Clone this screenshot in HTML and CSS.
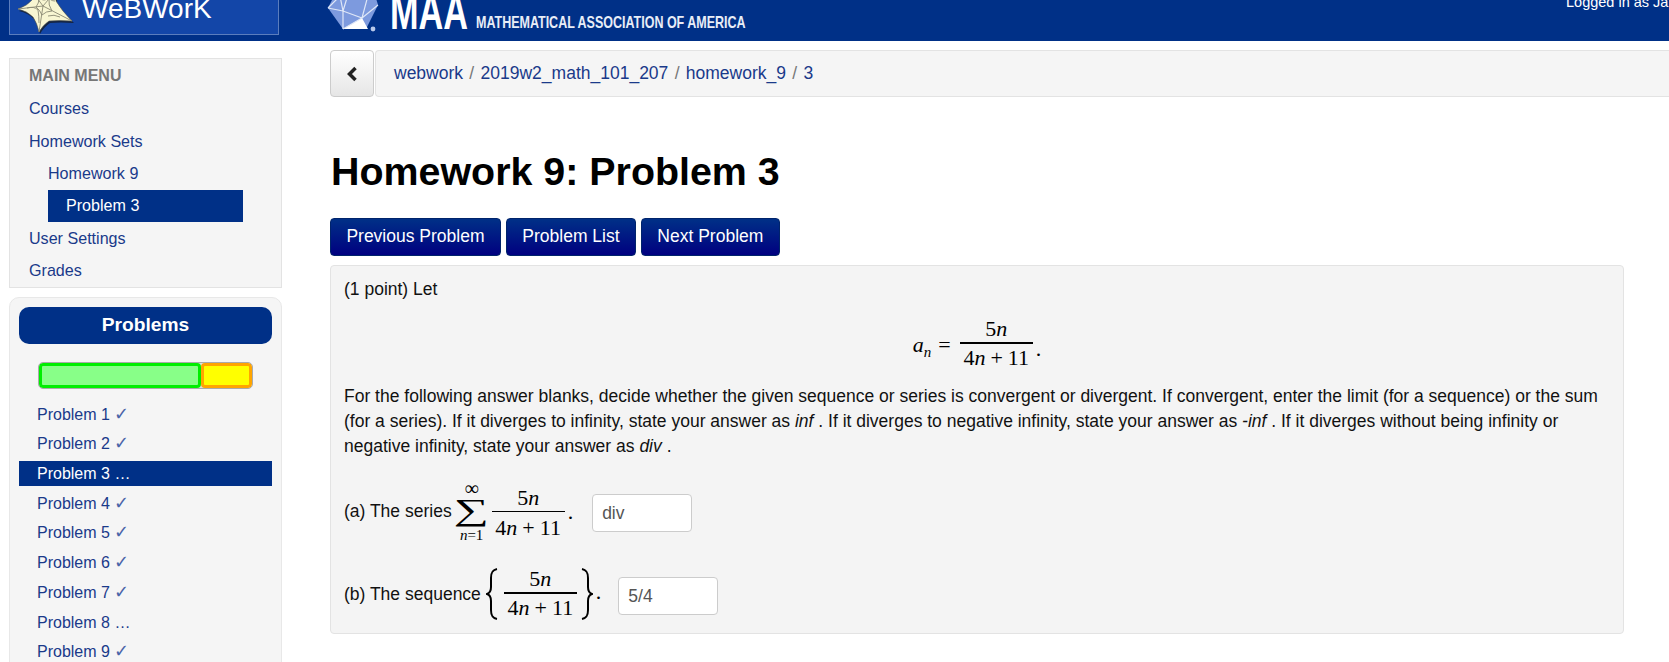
FILE: index.html
```html
<!DOCTYPE html>
<html lang="en">
<head>
<meta charset="utf-8">
<title>Homework 9: Problem 3</title>
<link rel="stylesheet" href="styles.css">
</head>
<body>
<header class="topbar">
  <a class="brand">
    <svg class="star" viewBox="0 0 70 50" width="70" height="50" aria-hidden="true">
      <path class="star-shadow" d="M9 25 Q18 22 24 15 Q22 8 19 2 Q27 6 34 9 Q42 6 51 2 Q47 10 47 17 Q53 27 64 37 Q50 36 40 37 Q34 41 30 48 Q28 39 24 33 Q18 27 9 25 Z"/>
      <path class="star-fill" d="M8 23 Q17 20 23 13 Q21 6 18 0 Q26 4 33 7 Q41 4 50 0 Q46 8 46 15 Q52 25 62 35 Q49 34 39 35 Q33 39 29 46 Q27 37 23 31 Q17 25 8 23 Z"/>
      <path class="star-web" d="M33 20 L18 0 M33 20 L50 0 M33 20 L62 35 M33 20 L29 46 M33 20 L8 23 M26 21 Q29 17 29 13 Q34 15 39 13 Q38 19 42 25 Q36 25 32 29 Q30 24 26 21 Z M17 22 Q24 20 28 24 Q29 30 29 37 M38 30 Q44 28 50 31 M45 15 Q40 15 38 10"/>
    </svg>
    <span class="brand-name">WeBWorK</span>
  </a>
  <div class="maa">
    <svg class="maa-gem" viewBox="0 0 56 46" width="56" height="46" aria-hidden="true">
      <path class="gem-body" d="M12 0 L47 0 L52 17 L40 41 L17 41 L2 20 Z"/>
      <path class="gem-white" d="M17 41 L36 30 L42 41 Z"/>
      <path class="gem-lines" d="M2 20 L17 23 L36 30 L44 0 M17 23 L17 41 M17 23 L24 0 M36 30 L52 17 M36 30 L17 41 M2 20 L14 8 L24 0 M14 8 L17 23"/>
      <circle class="gem-dot" cx="47" cy="41" r="2.4"/>
    </svg>
    <span class="maa-mark">MAA</span>
    <span class="maa-name">MATHEMATICAL ASSOCIATION OF AMERICA</span>
  </div>
  <div class="login">Logged in as Ja</div>
</header>

<div class="page">
  <aside class="sidebar">
    <nav class="menu">
      <div class="menu-title">MAIN MENU</div>
      <a class="menu-item">Courses</a>
      <a class="menu-item">Homework Sets</a>
      <a class="menu-item sub">Homework 9</a>
      <a class="menu-item sub active"><span>Problem 3</span></a>
      <a class="menu-item">User Settings</a>
      <a class="menu-item">Grades</a>
    </nav>
    <section class="problems">
      <h2 class="problems-title">Problems</h2>
      <div class="progress">
        <div class="seg seg-done"></div>
        <div class="seg seg-part"></div>
      </div>
      <ul class="plist">
        <li class="pitem">Problem 1 <span class="mark">✓</span></li>
        <li class="pitem">Problem 2 <span class="mark">✓</span></li>
        <li class="pitem current">Problem 3 <span>…</span></li>
        <li class="pitem">Problem 4 <span class="mark">✓</span></li>
        <li class="pitem">Problem 5 <span class="mark">✓</span></li>
        <li class="pitem">Problem 6 <span class="mark">✓</span></li>
        <li class="pitem">Problem 7 <span class="mark">✓</span></li>
        <li class="pitem">Problem 8 <span>…</span></li>
        <li class="pitem">Problem 9 <span class="mark">✓</span></li>
      </ul>
    </section>
  </aside>

  <main class="content">
    <div class="crumbs">
      <button class="back" aria-label="Back">
        <svg viewBox="0 0 12 16" width="12" height="16" aria-hidden="true"><path d="M9.5 2 L3.5 8 L9.5 14" /></svg>
      </button>
      <div class="crumb-trail">
        <a>webwork</a><span class="sep">/</span><a>2019w2_math_101_207</a><span class="sep">/</span><a>homework_9</a><span class="sep">/</span><a>3</a>
      </div>
    </div>

    <h1 class="title">Homework 9: Problem 3</h1>

    <div class="actions">
      <button class="btn">Previous Problem</button>
      <button class="btn">Problem List</button>
      <button class="btn">Next Problem</button>
    </div>

    <article class="problem">
      <p class="line">(1 point) Let</p>
      <div class="display">
        <span class="math var">a<sub>n</sub></span>
        <span class="math eq">=</span>
        <span class="frac"><span class="num math">5<i>n</i></span><span class="den math">4<i>n</i><span class="plus">+</span>11</span></span>
        <span class="math dot">.</span>
      </div>
      <p class="para">For the following answer blanks, decide whether the given sequence or series is convergent or divergent. If convergent, enter the limit (for a sequence) or the sum (for a series). If it diverges to infinity, state your answer as <i>inf</i> . If it diverges to negative infinity, state your answer as <i>-inf</i> . If it diverges without being infinity or negative infinity, state your answer as <i>div</i> .</p>

      <div class="answer answer-a">
        <span>(a) The series</span>
        <span class="sum math"><span class="sum-top">∞</span><span class="sum-sign">∑</span><span class="sum-bot"><i>n</i>=1</span></span>
        <span class="frac"><span class="num math">5<i>n</i></span><span class="den math">4<i>n</i><span class="plus">+</span>11</span></span>
        <span class="math dot-low">.</span>
        <input class="field field-a" value="div" aria-label="answer a">
      </div>

      <div class="answer answer-b">
        <span>(b) The sequence</span>
        <svg class="brace brace-l" viewBox="0 0 12 52" width="12" height="52" aria-hidden="true"><path d="M11 1 C6 2 5 5 5 10 L5 19 C5 23 4 25 1 26 C4 27 5 29 5 33 L5 42 C5 47 6 50 11 51"/></svg>
        <span class="frac"><span class="num math">5<i>n</i></span><span class="den math">4<i>n</i><span class="plus">+</span>11</span></span>
        <svg class="brace brace-r" viewBox="0 0 12 52" width="12" height="52" aria-hidden="true"><path d="M1 1 C6 2 7 5 7 10 L7 19 C7 23 8 25 11 26 C8 27 7 29 7 33 L7 42 C7 47 6 50 1 51"/></svg>
        <span class="math dot-low">.</span>
        <input class="field field-b" value="5/4" aria-label="answer b">
      </div>
    </article>
  </main>
</div>
</body>
</html>
```

FILE: styles.css
```css
* { box-sizing: border-box; }
html, body { margin: 0; padding: 0; height: 662px; overflow: hidden; background: #fff; }
body { font-family: "Liberation Sans", Arial, sans-serif; font-size: 16px; color: #111; }
a { color: #1a3a8a; text-decoration: none; }

/* top bar */
.topbar { height: 41px; background: #003087; display: flex; overflow: hidden; color: #fff; }
.brand { width: 270px; height: 35px; margin-left: 9px; background: #1346a8; border: 1px solid #5b7dbd; border-top: 0; display: flex; overflow: hidden; flex: none; }
.star { flex: none; margin: -14px 0 0 0; }
.star-shadow { fill: #141c2b; opacity: .8; }
.star-fill { fill: #f8f6d2; stroke: #55564c; stroke-width: .6; }
.star-web { fill: none; stroke: #8a8974; stroke-width: .9; }
.brand-name { font-size: 28px; line-height: 32px; color: #fff; margin: -7px 0 0 2px; }
.maa { display: flex; margin-left: 47px; flex: none; height: 41px; }
.maa-gem { flex: none; margin-top: -12px; }
.gem-body { fill: #7d9ade; }
.gem-white { fill: #fff; }
.gem-lines { fill: none; stroke: #dfe7f7; stroke-width: 1.2; }
.gem-dot { fill: #b9c9ea; }
.maa-mark { display: block; font-size: 50px; line-height: 50px; font-weight: bold; color: #fff; margin: -13px 0 0 8px; width: 78px; flex: none; transform: scaleX(.685); transform-origin: left top; }
.maa-name { display: block; flex: none; width: 366px; margin: 14px 0 0 8px; font-size: 17px; line-height: 17px; font-weight: bold; white-space: nowrap; color: #e8edf7; transform: scaleX(.735); transform-origin: left top; }
.login { margin-left: auto; width: 103px; flex: none; overflow: hidden; white-space: nowrap; font-size: 14.5px; line-height: 16px; margin-top: -6px; height: 22px; }

/* page */
.page { display: flex; align-items: flex-start; }
.sidebar { width: 273px; margin-left: 9px; flex: none; padding-top: 17px; }
.menu { height: 230px; background: #f5f5f5; border: 1px solid #e3e3e3; padding: 0 19px; }
.menu-title { font-weight: bold; color: #777; line-height: 34px; height: 33.4px; }
.menu-item { display: block; height: 32.4px; line-height: 32.4px; font-size: 16.1px; }
.menu-item.sub { margin-left: 19px; margin-right: 19px; }
.menu-item.active { background: #003087; color: #fff; padding-left: 18px; height: 32px; line-height: 31px; }

.problems { margin-top: 9px; background: #f5f5f5; border: 1px solid #e8e8e8; border-radius: 10px 10px 0 0; padding: 9px 9px 0; height: 420px; }
.problems-title { margin: 0; height: 37px; line-height: 36px; border-radius: 10px; background: #003087; color: #fff; text-align: center; font-size: 19.2px; font-weight: bold; }
.progress { display: flex; height: 27px; margin: 18px 9px 0 19px; width: 215px; border: 1px solid #aaa; border-radius: 5px; overflow: hidden; background: #ddd; }
.seg { height: 100%; border-width: 3px; border-style: solid; border-radius: 4px; }
.seg-done { width: 162px; background: #88ff88; border-color: #00ee00; }
.seg-part { flex: 1; background: #ffff00; border-color: #ffa500; }
.plist { list-style: none; margin: 10.5px 0 0; padding: 0; }
.pitem { height: 29.75px; line-height: 29.75px; padding-left: 18px; color: #1a3a8a; white-space: nowrap; }
.pitem.current { background: #003087; color: #fff; height: 25px; line-height: 25px; margin: 2.4px 0 2.35px; }
.mark { color: #4a64a8; font-size: 18px; line-height: 0; }

/* main */
.content { flex: 1; min-width: 0; margin-left: 48px; padding-top: 9px; }
.crumbs { display: flex; height: 47px; gap: 1px; }
.back { width: 44px; flex: none; padding: 0; display: flex; align-items: center; justify-content: center; background: linear-gradient(#ffffff, #e6e6e6); border: 1px solid #ccc; border-radius: 4px; }
.back path { fill: none; stroke: #222; stroke-width: 3.5; }
.crumb-trail { flex: 1; background: #f5f5f5; border: 1px solid #e3e3e3; border-right: 0; border-radius: 4px 0 0 4px; padding-left: 18px; line-height: 44px; font-size: 17.5px; }
.sep { color: #777; padding: 0 6.3px; }
.title { margin: 0; height: 121px; padding: 49px 0 0 1px; font-size: 39.4px; line-height: 50px; font-weight: bold; color: #000; }
.actions { display: flex; gap: 5px; }
.btn { height: 38px; padding: 0 15.4px 2px; font: 17.5px "Liberation Sans", Arial, sans-serif; color: #fff; background: linear-gradient(#003087, #000080); border: 1px solid #00246b; border-radius: 4px; }
.problem { margin: 9px 45px 0 0; height: 369px; background: #f4f4f4; border: 1px solid #e3e3e3; border-radius: 4px; padding: 11px 13px 0; line-height: 25px; color: #111; font-size: 17.5px; }
.line, .para { margin: 0; font-size: 17.5px; }
.math { font-family: "Liberation Serif", "Times New Roman", serif; font-size: 22px; color: #000; }
.display { display: flex; justify-content: center; align-items: center; height: 54px; margin-top: 15px; }
.var { font-style: italic; margin-right: 7px; }
.var sub { font-size: 15px; line-height: 0; }
.eq { margin-right: 9px; }
.frac { display: inline-flex; flex-direction: column; align-items: center; min-width: 73px; }
.num { line-height: 24px; height: 25px; }
.den { line-height: 26px; border-top: 2px solid #000; padding-top: 1px; width: 100%; text-align: center; white-space: nowrap; }
.answer-a .frac { margin-top: 4px; }
.answer-a .den { border-top-width: 1px; padding-top: 3px; }
.plus { margin: 0 5px; }
.dot { margin: 8px 0 0 3px; }
.para { margin-top: 13px; }
.answer { display: flex; align-items: center; font-size: 17.5px; }
.answer-a { height: 74px; margin-top: 15px; }
.answer-b { height: 62px; margin-top: 15px; }
.sum { display: inline-flex; flex-direction: column; align-items: center; margin: 2px 6px 0 6px; width: 28px; flex: none; }
.sum-top { font-size: 20px; line-height: 14px; }
.sum-sign { font-size: 38px; line-height: 30px; transform: scale(1.3, .8); }
.sum-bot { font-size: 15px; line-height: 16px; padding-top: 2px; white-space: nowrap; box-sizing: content-box; }
.dot-low { margin: 0 0 0 3px; }
.answer-b .dot-low { margin-bottom: 6px; }
.brace { flex: none; }
.brace path { fill: none; stroke: #000; stroke-width: 2; }
.brace-l { margin: 0 6px 0 5px; }
.brace-r { margin: 0 0 0 4px; }
.field { width: 100px; height: 38px; padding: 0 9px; font: 17.5px "Liberation Sans", Arial, sans-serif; color: #555; background: #fff; border: 1px solid #ccc; border-radius: 4px; }
.field-a { margin-left: 19px; margin-top: 4px; }
.field-b { margin-left: 17px; margin-top: 4px; }
```
